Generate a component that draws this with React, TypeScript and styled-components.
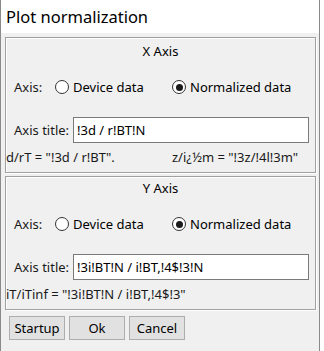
import React, { useState } from 'react';
import styled, { createGlobalStyle } from 'styled-components';

const GlobalStyle = createGlobalStyle`
  html, body {
    margin: 0;
    padding: 0;
    background: #ffffff;
  }
  body {
    font-family: "Noto Sans", "Liberation Sans", Arial, sans-serif;
  }
`;

const Window = styled.div`
  width: 320px;
  height: 351px;
  border-left: 1px solid #8a8a8a;
  border-right: 1px solid #8a8a8a;
  background: #f0f0f0;
  display: flex;
  flex-direction: column;
  box-sizing: border-box;
`;

const TitleBar = styled.div`
  height: 33px;
  background: #ffffff;
  display: flex;
  align-items: center;
  padding: 0 0 1px 5px;
  box-sizing: border-box;
  font-size: 16.5px;
  color: #000;
`;

const Body = styled.div`
  flex: 1;
  padding: 4px 3px 0 4px;
  display: flex;
  flex-direction: column;
  gap: 3px;
`;

const Group = styled.div<{ $height: number }>`
  height: ${(p) => p.$height}px;
  border: 1px solid #a0a0a0;
  box-shadow: inset 1px 1px 0 #ffffff, 1px 1px 0 #ffffff;
  box-sizing: border-box;
  display: flex;
  flex-direction: column;
  font-size: 13px;
  color: #000;
`;

const GroupTitle = styled.div<{ $top: number }>`
  text-align: center;
  padding-top: ${(p) => p.$top}px;
  height: 20px;
`;

const AxisRow = styled.div`
  display: flex;
  align-items: center;
  margin-top: 15px;
  padding-left: 8px;
  height: 20px;
`;

const Label = styled.span<{ $width: number }>`
  width: ${(p) => p.$width}px;
  color: #1a1a1a;
`;

const RadioOption = styled.label<{ $width: number }>`
  display: flex;
  align-items: center;
  gap: 4px;
  width: ${(p) => p.$width}px;
  cursor: default;
`;

const RadioCircle = styled.span<{ $checked: boolean }>`
  width: 12px;
  height: 12px;
  border: 1px solid #333;
  border-radius: 50%;
  background: #fff;
  display: flex;
  align-items: center;
  justify-content: center;
  &::after {
    content: '';
    width: 7px;
    height: 7px;
    border-radius: 50%;
    background: ${(p) => (p.$checked ? '#1a1a1a' : 'transparent')};
  }
`;

const TitleRow = styled.div`
  display: flex;
  align-items: center;
  margin-top: 20px;
  padding-left: 8px;
`;

const Input = styled.input`
  width: 236px;
  height: 26px;
  box-sizing: border-box;
  border: 1px solid #7a7a7a;
  background: #fff;
  font-family: inherit;
  font-size: 13px;
  padding: 0 3px;
  color: #000;
  outline: none;
`;

const Info = styled.div`
  display: flex;
  margin-top: 5px;
  color: #1a1a1a;
  white-space: pre;
`;

const Buttons = styled.div`
  display: flex;
  gap: 4px;
  padding: 3px 0 0 4px;
`;

const Button = styled.button`
  width: 56px;
  height: 24px;
  border: 1px solid #adadad;
  background: #e1e1e1;
  font-family: inherit;
  font-size: 13px;
  color: #000;
  padding: 0;
`;

interface AxisGroupProps {
  name: string;
  title: string;
  info: string[];
  height: number;
  top: number;
}

const AxisGroup: React.FC<AxisGroupProps> = ({ name, title, info, height, top }) => {
  const [normalized, setNormalized] = useState(true);
  const [value, setValue] = useState(title);

  return (
    <Group $height={height}>
      <GroupTitle $top={top}>{name}</GroupTitle>
      <AxisRow>
        <Label $width={41}>Axis:</Label>
        <RadioOption $width={117} onClick={() => setNormalized(false)}>
          <RadioCircle $checked={!normalized} />
          Device data
        </RadioOption>
        <RadioOption $width={130} onClick={() => setNormalized(true)}>
          <RadioCircle $checked={normalized} />
          Normalized data
        </RadioOption>
      </AxisRow>
      <TitleRow>
        <Label $width={59}>Axis title:</Label>
        <Input value={value} onChange={(e) => setValue(e.target.value)} />
      </TitleRow>
      <Info>
        {info.map((t, i) => (
          <span key={i} style={{ width: i === 0 && info.length > 1 ? 166 : undefined }}>
            {t}
          </span>
        ))}
      </Info>
    </Group>
  );
};

const App: React.FC = () => {
  return (
    <>
      <GlobalStyle />
      <Window>
        <TitleBar>Plot normalization</TitleBar>
        <Body>
          <AxisGroup
            name="X Axis"
            title="!3d / r!BT!N"
            info={['d/rT = "!3d / r!BT".', 'z/i¿½m = "!3z/!4l!3m"']}
            height={136}
            top={4}
          />
          <AxisGroup
            name="Y Axis"
            title="!3i!BT!N / i!BT,!4$!3!N"
            info={['iT/iTinf = "!3i!BT!N / i!BT,!4$!3"']}
            height={134}
            top={2}
          />
          <Buttons>
            <Button>Startup</Button>
            <Button>Ok</Button>
            <Button>Cancel</Button>
          </Buttons>
        </Body>
      </Window>
    </>
  );
};

export default App;
